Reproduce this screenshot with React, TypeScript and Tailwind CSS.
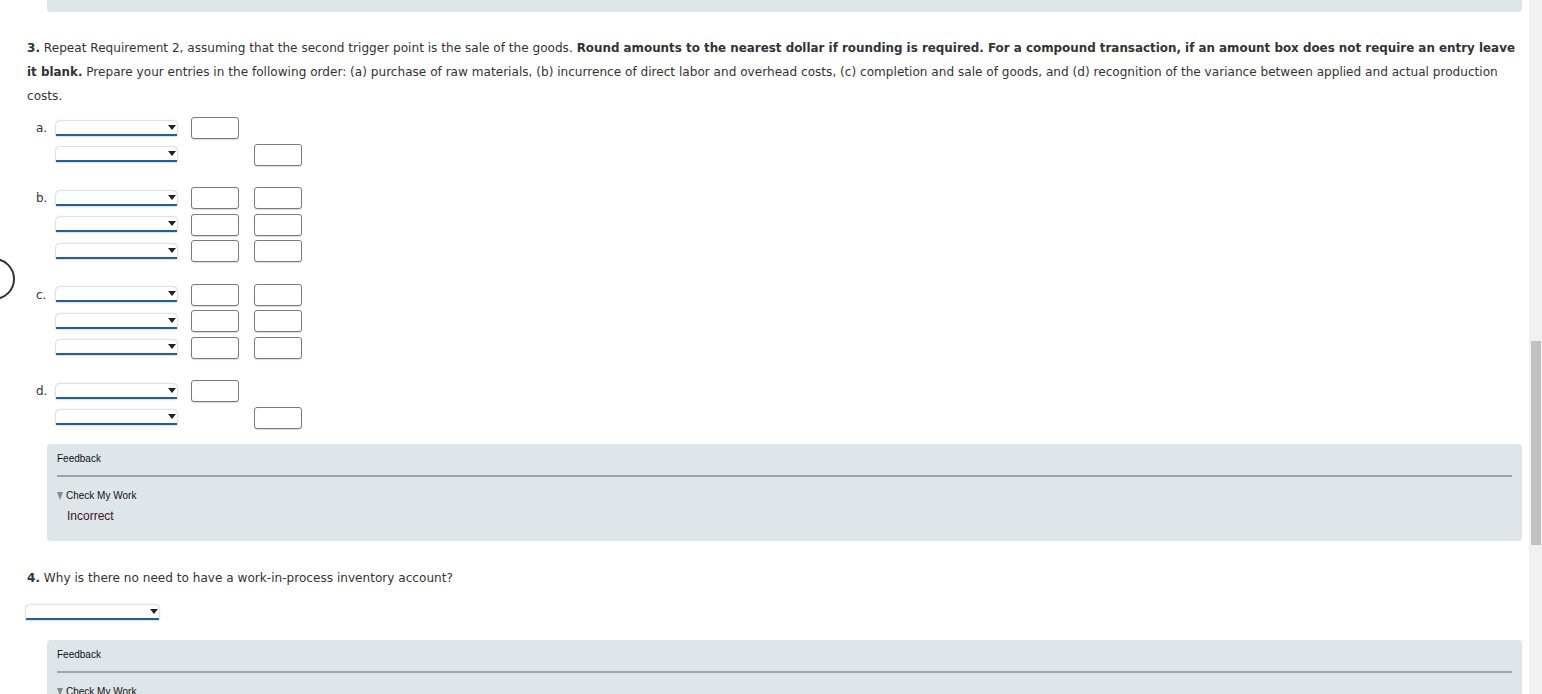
const verdana = { fontFamily: '"DejaVu Sans", Verdana, sans-serif' };

function Dropdown({ w = 'w-[121px]' }: { w?: string }) {
  return (
    <div className={`relative ${w} h-[15px] bg-white rounded-t-[4px] shadow-[0_0_2px_rgba(0,0,0,0.45)] border-b-2 border-[#1f6190]`}>
      <span className="absolute right-[1px] top-[4px] w-0 h-0 border-l-[4px] border-r-[4px] border-t-[5px] border-l-transparent border-r-transparent border-t-[#222]" />
    </div>
  );
}

function Box({ show }: { show: boolean }) {
  if (!show) return <div className="w-[48px] h-[22px]" />;
  return <div className="w-[48px] h-[22px] bg-white border border-[#7a7a7a] rounded-[3px] shadow-[0_1px_1px_rgba(0,0,0,0.15)]" />;
}

type Row = { d: boolean; c: boolean };

const groups: { label: string; rows: Row[] }[] = [
  { label: 'a.', rows: [{ d: true, c: false }, { d: false, c: true }] },
  { label: 'b.', rows: [{ d: true, c: true }, { d: true, c: true }, { d: true, c: true }] },
  { label: 'c.', rows: [{ d: true, c: true }, { d: true, c: true }, { d: true, c: true }] },
  { label: 'd.', rows: [{ d: true, c: false }, { d: false, c: true }] },
];

function Feedback({ incorrect = true }: { incorrect?: boolean }) {
  return (
    <div className="ml-[20px] bg-[#dfe6e9] rounded-[4px] px-[10px] pt-[9px] pb-[18px]" style={{ fontFamily: 'Arial, "Liberation Sans", sans-serif' }}>
      <div className="text-[10px] leading-[12px] text-[#111]">Feedback</div>
      <div className="mt-[10px] h-[2px] bg-[#9ca5a8]" />
      <div className="mt-[13px] flex items-center text-[10px] leading-[12px] text-[#111]">
        <span className="mr-[3px] w-0 h-0 border-l-[3.5px] border-r-[3.5px] border-t-[8px] border-l-transparent border-r-transparent border-t-[#8a8a8a]" />
        Check My Work
      </div>
      {incorrect && <div className="mt-[7px] pl-[10px] text-[12px] leading-[14px] text-[#3b1428]">Incorrect</div>}
    </div>
  );
}

export default function App() {
  return (
    <div className="relative flex h-[694px] w-[1542px] overflow-hidden bg-white text-[#333]" style={verdana}>
      {/* floating round button at the left edge */}
      <div className="absolute left-[-27px] top-[258px] w-[42px] h-[42px] rounded-full border-[2.5px] border-[#333] bg-white" />

      <div className="flex-1 pl-[27px] pr-[7px]">
        <div className="ml-[20px] h-[12px] bg-[#dfe6e9] rounded-b-[4px]" />

        <p className="mt-[24px] text-[12.1px] leading-[24px]">
          <b>3.</b> Repeat Requirement 2, assuming that the second trigger point is the sale of the goods.{' '}
          <b className="text-[11.9px]">Round amounts to the nearest dollar if rounding is required. For a compound transaction, if an amount box does not require an entry leave it blank.</b>{' '}
          Prepare your entries in the following order: (a) purchase of raw materials, (b) incurrence of direct labor and overhead costs, (c) completion and sale of goods, and (d) recognition of the variance between applied and actual production costs.
        </p>

        <div className="mt-[7px] flex flex-col gap-[17px]">
          {groups.map((g) => (
            <div key={g.label}>
              {g.rows.map((r, i) => (
                <div key={i} className="flex items-center h-[26.5px]">
                  <div className="w-[29px] pl-[9px] text-[12px]">{i === 0 ? g.label : ''}</div>
                  <Dropdown />
                  <div className="ml-[14px]"><Box show={r.d} /></div>
                  <div className="ml-[15px]"><Box show={r.c} /></div>
                </div>
              ))}
            </div>
          ))}
        </div>

        <div className="mt-[13px]">
          <Feedback />
        </div>

        <p className="mt-[25px] text-[12.1px] leading-[24px]">
          <b>4.</b> Why is there no need to have a work-in-process inventory account?
        </p>

        <div className="mt-[15px] -ml-[1px]">
          <Dropdown w="w-[133px]" />
        </div>

        <div className="mt-[20px]">
          <Feedback />
        </div>
      </div>

      <div className="w-[13px] bg-[#f1f1f1] pt-[341px] pl-[2px]">
        <div className="w-[10px] h-[204px] bg-[#c1c1c1]" />
      </div>
    </div>
  );
}
